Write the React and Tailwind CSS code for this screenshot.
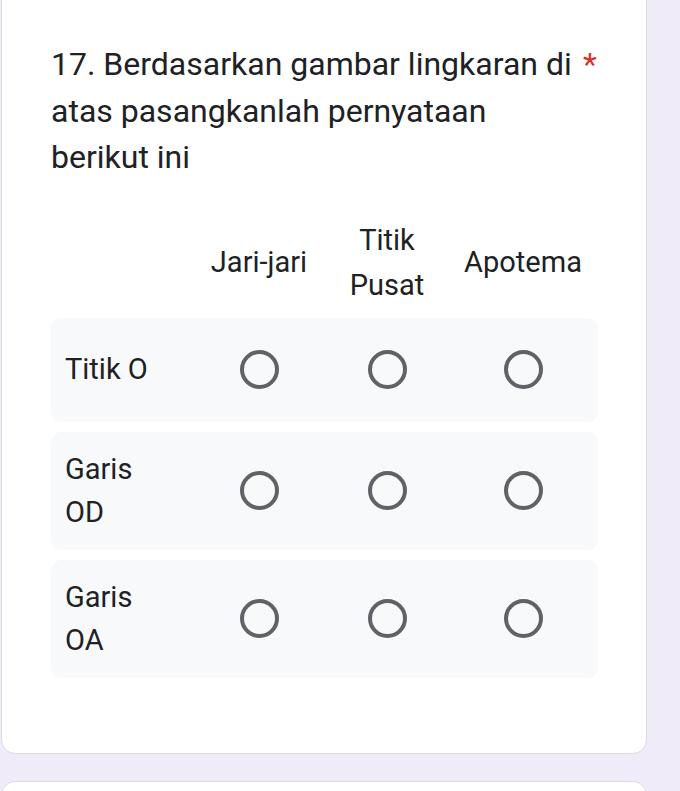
import React from 'react';

const columns = ['Jari-jari', 'Titik Pusat', 'Apotema'];
const rows = ['Titik O', 'Garis OD', 'Garis OA'];

const Radio = () => (
    <div className="w-[39px] h-[39px] rounded-full border-[4px] border-[#5f6368]" />
);

const App = () => {
    return (
        <div className="h-[791px] bg-[#f0ebf8] overflow-hidden" style={{ fontFamily: 'Roboto, "Noto Sans", sans-serif' }}>
            <div className="ml-[1px] w-[646px] -mt-[20px] bg-white border-[1.5px] border-[#dadce0] rounded-[14px] pt-[60px] pb-[75px] pl-[49px] pr-[48px]">
                {/* question title */}
                <div className="flex text-[32px] leading-[46.5px] text-[#202124]">
                    <span className="w-[530px]">17. Berdasarkan gambar lingkaran di atas pasangkanlah pernyataan berikut ini</span>
                    <span className="text-[#d93025] pl-[2px]">*</span>
                </div>

                {/* grid */}
                <div className="mt-[37px]">
                    <div className="grid grid-cols-[140px_136px_120px_152px] h-[90px] items-center text-[29px] leading-[45px] text-[#202124] text-center">
                        <div />
                        {columns.map((c) => (
                            <div key={c} className="px-[8px]">{c}</div>
                        ))}
                    </div>
                    <div className="mt-[10px] flex flex-col gap-[10px]">
                        {rows.map((r) => (
                            <div key={r} className="grid grid-cols-[140px_136px_120px_152px] items-center bg-[#f8f9fa] rounded-[10px] min-h-[104px]">
                                <div className="pl-[14px] pr-[36px] py-[16px] text-[29px] leading-[43px] text-[#202124]">{r}</div>
                                {columns.map((c) => (
                                    <div key={c} className="flex justify-center">
                                        <Radio />
                                    </div>
                                ))}
                            </div>
                        ))}
                    </div>
                </div>
            </div>
            <div className="ml-[1px] w-[646px] mt-[27px] h-[60px] bg-white border-[1.5px] border-[#dadce0] rounded-[14px]" />
        </div>
    );
};

export default App;
